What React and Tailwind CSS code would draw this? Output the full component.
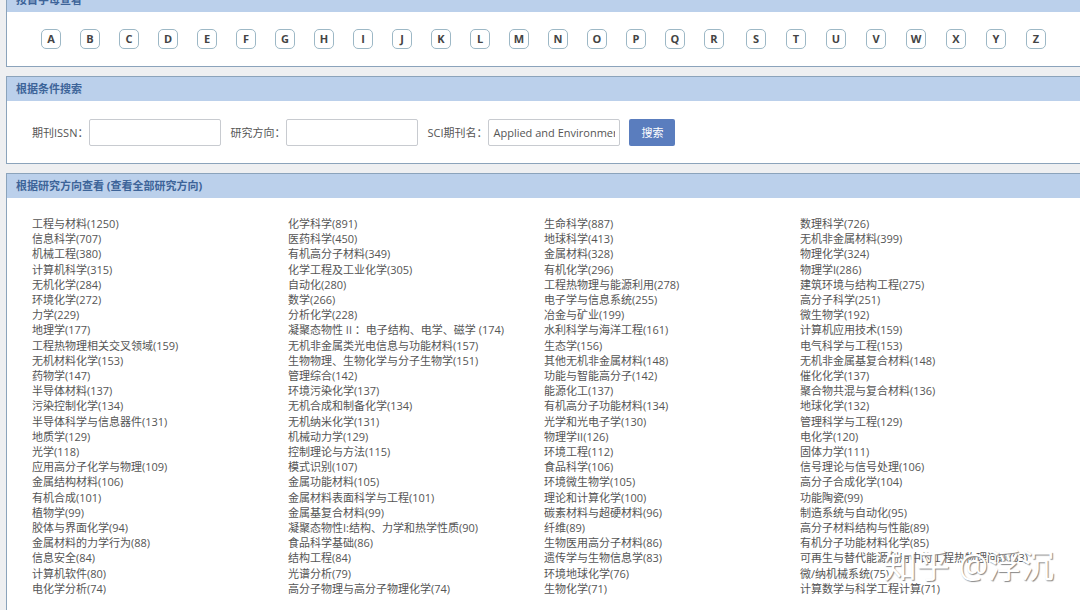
import React, { useState } from 'react';

const lettersAtoR = 'ABCDEFGHIJKLMNOPQR'.split('');
const lettersStoZ = 'STUVWXYZ'.split('');

// one array per column, 25 entries each
const columns = [
  [
    '工程与材料(1250)',
    '信息科学(707)',
    '机械工程(380)',
    '计算机科学(315)',
    '无机化学(284)',
    '环境化学(272)',
    '力学(229)',
    '地理学(177)',
    '工程热物理相关交叉领域(159)',
    '无机材料化学(153)',
    '药物学(147)',
    '半导体材料(137)',
    '污染控制化学(134)',
    '半导体科学与信息器件(131)',
    '地质学(129)',
    '光学(118)',
    '应用高分子化学与物理(109)',
    '金属结构材料(106)',
    '有机合成(101)',
    '植物学(99)',
    '胶体与界面化学(94)',
    '金属材料的力学行为(88)',
    '信息安全(84)',
    '计算机软件(80)',
    '电化学分析(74)',
  ],
  [
    '化学科学(891)',
    '医药科学(450)',
    '有机高分子材料(349)',
    '化学工程及工业化学(305)',
    '自动化(280)',
    '数学(266)',
    '分析化学(228)',
    '凝聚态物性 II ：电子结构、电学、磁学 (174)',
    '无机非金属类光电信息与功能材料(157)',
    '生物物理、生物化学与分子生物学(151)',
    '管理综合(142)',
    '环境污染化学(137)',
    '无机合成和制备化学(134)',
    '无机纳米化学(131)',
    '机械动力学(129)',
    '控制理论与方法(115)',
    '模式识别(107)',
    '金属功能材料(105)',
    '金属材料表面科学与工程(101)',
    '金属基复合材料(99)',
    '凝聚态物性I:结构、力学和热学性质(90)',
    '食品科学基础(86)',
    '结构工程(84)',
    '光谱分析(79)',
    '高分子物理与高分子物理化学(74)',
  ],
  [
    '生命科学(887)',
    '地球科学(413)',
    '金属材料(328)',
    '有机化学(296)',
    '工程热物理与能源利用(278)',
    '电子学与信息系统(255)',
    '冶金与矿业(199)',
    '水利科学与海洋工程(161)',
    '生态学(156)',
    '其他无机非金属材料(148)',
    '功能与智能高分子(142)',
    '能源化工(137)',
    '有机高分子功能材料(134)',
    '光学和光电子学(130)',
    '物理学II(126)',
    '环境工程(112)',
    '食品科学(106)',
    '环境微生物学(105)',
    '理论和计算化学(100)',
    '碳素材料与超硬材料(96)',
    '纤维(89)',
    '生物医用高分子材料(86)',
    '遗传学与生物信息学(83)',
    '环境地球化学(76)',
    '生物化学(71)',
  ],
  [
    '数理科学(726)',
    '无机非金属材料(399)',
    '物理化学(324)',
    '物理学I(286)',
    '建筑环境与结构工程(275)',
    '高分子科学(251)',
    '微生物学(192)',
    '计算机应用技术(159)',
    '电气科学与工程(153)',
    '无机非金属基复合材料(148)',
    '催化化学(137)',
    '聚合物共混与复合材料(136)',
    '地球化学(132)',
    '管理科学与工程(129)',
    '电化学(120)',
    '固体力学(111)',
    '信号理论与信号处理(106)',
    '高分子合成化学(104)',
    '功能陶瓷(99)',
    '制造系统与自动化(95)',
    '高分子材料结构与性能(89)',
    '有机分子功能材料化学(85)',
    '可再生与替代能源利用中的工程热物理问题(83)',
    '微/纳机械系统(75)',
    '计算数学与科学工程计算(71)',
  ],
];

const PanelTitle = ({ children }) => (
  <h2 className="h-6 bg-[#bbd0eb] pl-[9px] text-[11px] leading-6 font-bold text-[#3d6499]">
    {children}
  </h2>
);

const LetterLink = ({ letter }) => (
  <a
    href={`#${letter}`}
    className="flex h-5 w-5 items-center justify-center rounded-[5px] border border-[#9db8c6] text-[11px] leading-4 font-bold text-[#444]"
  >
    {letter}
  </a>
);

const Field = ({ id, label, value, onChange }) => (
  <div className="flex items-center gap-px">
    <label htmlFor={id} className="whitespace-nowrap">{label}</label>
    <input
      id={id}
      type="text"
      value={value}
      onChange={onChange}
      className="h-[27px] w-[132px] rounded-[2px] border border-[#c8cbd0] bg-white px-1 outline-none focus:border-[#5a7dbe]"
    />
  </div>
);

const App = () => {
  const [form, setForm] = useState({
    issn: '',
    field: '',
    name: 'Applied and Environmental Microbiology',
  });

  return (
    <div className="relative flex min-h-screen flex-col overflow-hidden bg-[#eeeff1] pl-[6px] font-['Open_Sans','Noto_Sans_CJK_SC',sans-serif] text-[11px] leading-[15px] text-[#555]">
      {/* first panel is scrolled a little past the top edge */}
      <main className="-mt-[13px] flex flex-1 flex-col gap-[9px]">
        <section className="border-y border-l border-[#8ba3bb] bg-white">
          <PanelTitle>按首字母查看</PanelTitle>
          <nav className="flex gap-[22px] py-[17px] pl-[34px]">
            <div className="flex gap-[19px]">
              {lettersAtoR.map((l) => <LetterLink key={l} letter={l} />)}
            </div>
            <div className="flex gap-5">
              {lettersStoZ.map((l) => <LetterLink key={l} letter={l} />)}
            </div>
          </nav>
        </section>

        <section className="border-y border-l border-[#8ba3bb] bg-white">
          <PanelTitle>根据条件搜索</PanelTitle>
          <form
            className="flex items-center gap-[9px] pt-[18px] pb-[17px] pl-[25px]"
            onSubmit={(e) => e.preventDefault()}
          >
            <Field
              id="issn"
              label="期刊ISSN："
              value={form.issn}
              onChange={(e) => setForm({ ...form, issn: e.target.value })}
            />
            <Field
              id="field"
              label="研究方向："
              value={form.field}
              onChange={(e) => setForm({ ...form, field: e.target.value })}
            />
            <Field
              id="name"
              label="SCI期刊名："
              value={form.name}
              onChange={(e) => setForm({ ...form, name: e.target.value })}
            />
            <button type="submit" className="h-[27px] rounded-[2px] bg-[#5a7dbe] px-3 text-white">
              搜索
            </button>
          </form>
        </section>

        <section className="flex-1 border-t border-l border-[#8ba3bb] bg-white">
          <PanelTitle>
            根据研究方向查看 (<a href="#all">查看全部研究方向</a>)
          </PanelTitle>
          <div className="grid grid-cols-4 pt-[18px] pr-6 pb-[14px] pl-[25px]">
            {columns.map((items, i) => (
              <ul key={i} className="flex min-h-[380px] flex-col justify-between">
                {items.map((item) => (
                  <li key={item} className="whitespace-nowrap">
                    <a href="#list">{item}</a>
                  </li>
                ))}
              </ul>
            ))}
          </div>
        </section>
      </main>

      {/* watermark */}
      <div className="pointer-events-none absolute right-[26px] bottom-[26px] text-[33px] leading-9 text-white [text-shadow:1px_1px_1px_#888]">
        知乎 @浮沉
      </div>
    </div>
  );
};

export default App;
